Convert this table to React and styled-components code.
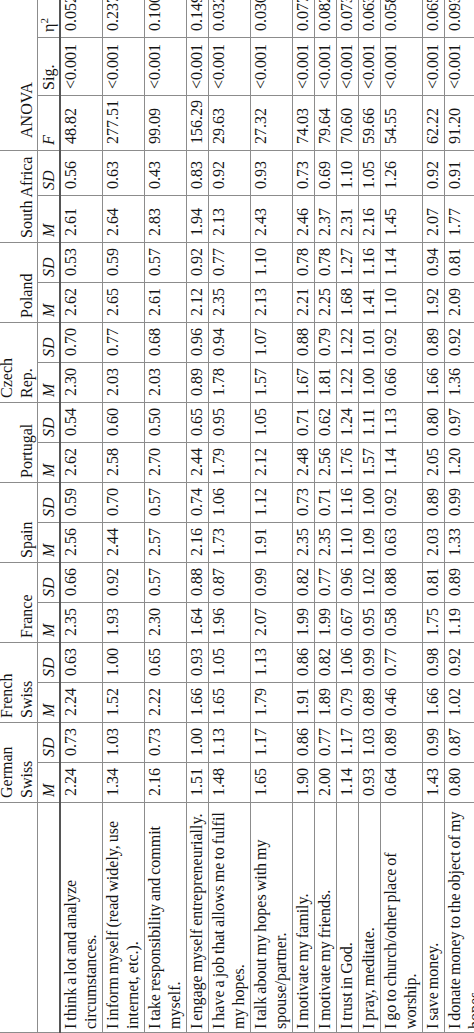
import React from 'react';
import styled, { createGlobalStyle, css } from 'styled-components';

const GlobalStyle = createGlobalStyle`
  html, body {
    margin: 0;
    padding: 0;
    background: #ffffff;
  }
  body {
    overflow: hidden;
  }
`

const GROUPS = [
  { name: <>German<br />Swiss</>, span: 2 },
  { name: <>French<br />Swiss</>, span: 2 },
  { name: 'France', span: 2 },
  { name: 'Spain', span: 2 },
  { name: 'Portugal', span: 2 },
  { name: <>Czech<br />Rep.</>, span: 2 },
  { name: 'Poland', span: 2 },
  { name: 'South Africa', span: 2 },
  { name: 'ANOVA', span: 3, inset: 12 },
]

// widths of the columns of the unrotated table, left to right
const COLS = [230, 40, 40, 40, 40, 40, 40, 40, 40, 40, 40, 40, 40, 40, 40, 47, 45, 55, 58, 48]

const ROWS = [
  ['I think a lot and analyze circumstances.', '2.24 0.73 2.24 0.63 2.35 0.66 2.56 0.59 2.62 0.54 2.30 0.70 2.62 0.53 2.61 0.56 48.82 <0.001 0.052'],
  ['I inform myself (read widely, use internet, etc.).', '1.34 1.03 1.52 1.00 1.93 0.92 2.44 0.70 2.58 0.60 2.03 0.77 2.65 0.59 2.64 0.63 277.51 <0.001 0.237'],
  ['I take responsibility and commit myself.', '2.16 0.73 2.22 0.65 2.30 0.57 2.57 0.57 2.70 0.50 2.03 0.68 2.61 0.57 2.83 0.43 99.09 <0.001 0.100'],
  ['I engage myself entrepreneurially.', '1.51 1.00 1.66 0.93 1.64 0.88 2.16 0.74 2.44 0.65 0.89 0.96 2.12 0.92 1.94 0.83 156.29 <0.001 0.149'],
  ['I have a job that allows me to fulfil my hopes.', '1.48 1.13 1.65 1.05 1.96 0.87 1.73 1.06 1.79 0.95 1.78 0.94 2.35 0.77 2.13 0.92 29.63 <0.001 0.032'],
  ['I talk about my hopes with my spouse/partner.', '1.65 1.17 1.79 1.13 2.07 0.99 1.91 1.12 2.12 1.05 1.57 1.07 2.13 1.10 2.43 0.93 27.32 <0.001 0.030'],
  ['I motivate my family.', '1.90 0.86 1.91 0.86 1.99 0.82 2.35 0.73 2.48 0.71 1.67 0.88 2.21 0.78 2.46 0.73 74.03 <0.001 0.077'],
  ['I motivate my friends.', '2.00 0.77 1.89 0.82 1.99 0.77 2.35 0.71 2.56 0.62 1.81 0.79 2.25 0.78 2.37 0.69 79.64 <0.001 0.082'],
  ['I trust in God.', '1.14 1.17 0.79 1.06 0.67 0.96 1.10 1.16 1.76 1.24 1.22 1.22 1.68 1.27 2.31 1.10 70.60 <0.001 0.073'],
  ['I pray, meditate.', '0.93 1.03 0.89 0.99 0.95 1.02 1.09 1.00 1.57 1.11 1.00 1.01 1.41 1.16 2.16 1.05 59.66 <0.001 0.063'],
  ['I go to church/other place of worship.', '0.64 0.89 0.46 0.77 0.58 0.88 0.63 0.92 1.14 1.13 0.66 0.92 1.10 1.14 1.45 1.26 54.55 <0.001 0.058'],
  ['I save money.', '1.43 0.99 1.66 0.98 1.75 0.81 2.03 0.89 2.05 0.80 1.66 0.89 1.92 0.94 2.07 0.92 62.22 <0.001 0.065'],
  ['I donate money to the object of my hopes.', '0.80 0.87 1.02 0.92 1.19 0.89 1.33 0.99 1.20 0.97 1.36 0.92 2.09 0.81 1.77 0.91 91.20 <0.001 0.093'],
]

const App = () => {
  const total = COLS.reduce((a, b) => a + b, 0)
  return (
    <>
      <GlobalStyle />
      <Stage>
        <Turned style={{ width: total }}>
          <Table>
            <colgroup>
              {COLS.map((w, i) => <col key={i} style={{ width: w }} />)}
            </colgroup>
            <thead>
              <tr>
                <GroupCell />
                {GROUPS.map((g, i) => (
                  <GroupCell key={i} colSpan={g.span} $inset={g.inset}>{g.name}</GroupCell>
                ))}
              </tr>
              <tr>
                <SubCell />
                {Array.from({ length: 8 }).map((_, i) => (
                  <React.Fragment key={i}>
                    <SubCell $italic>M</SubCell>
                    <SubCell $italic>SD</SubCell>
                  </React.Fragment>
                ))}
                <SubCell $italic>F</SubCell>
                <SubCell>Sig.</SubCell>
                <SubCell>η<sup>2</sup></SubCell>
              </tr>
            </thead>
            <tbody>
              {ROWS.map(([label, values], i) => (
                <tr key={i}>
                  <LabelCell>{label}</LabelCell>
                  {values.split(' ').map((v, j) => (
                    <NumCell key={j}>{v}</NumCell>
                  ))}
                </tr>
              ))}
            </tbody>
          </Table>
        </Turned>
      </Stage>
    </>
  )
}

const Stage = styled.div`
  width: 474px;
  height: 1033px;
  overflow: hidden;
  background: #fff;
`

// the table is printed sideways: its top edge lies on the left of the page
const Turned = styled.div`
  transform-origin: 0 0;
  transform: translate(-4px, 1033px) rotate(-90deg);
`

const Table = styled.table`
  width: 100%;
  table-layout: fixed;
  border-collapse: collapse;
  font-family: "Liberation Serif", "Times New Roman", serif;
  font-size: 16px;
  line-height: 20px;
  color: #141414;

  td, th {
    border: 1px solid #8c8c8c;
    font-weight: normal;
  }
  sup {
    font-size: 11px;
    line-height: 0;
    vertical-align: 6px;
  }
`

const GroupCell = styled.th`
  text-align: left;
  vertical-align: bottom;
  padding: 0 4px 0 ${(p) => p.$inset || 4}px;
  height: 40px;
`

const SubCell = styled.th`
  text-align: left;
  vertical-align: middle;
  padding: 1px 4px 0 5px;
  height: 20px;
  border-bottom: 2px solid #555 !important;
  ${(p) => p.$italic && css`
    font-style: italic;
  `}
`

const LabelCell = styled.td`
  text-align: left;
  vertical-align: top;
  padding: 0 3px 1px 3px;
  word-spacing: -1px;
`

const NumCell = styled.td`
  text-align: left;
  vertical-align: top;
  padding: 0 4px 1px 6px;
  white-space: nowrap;
`

export default App;
